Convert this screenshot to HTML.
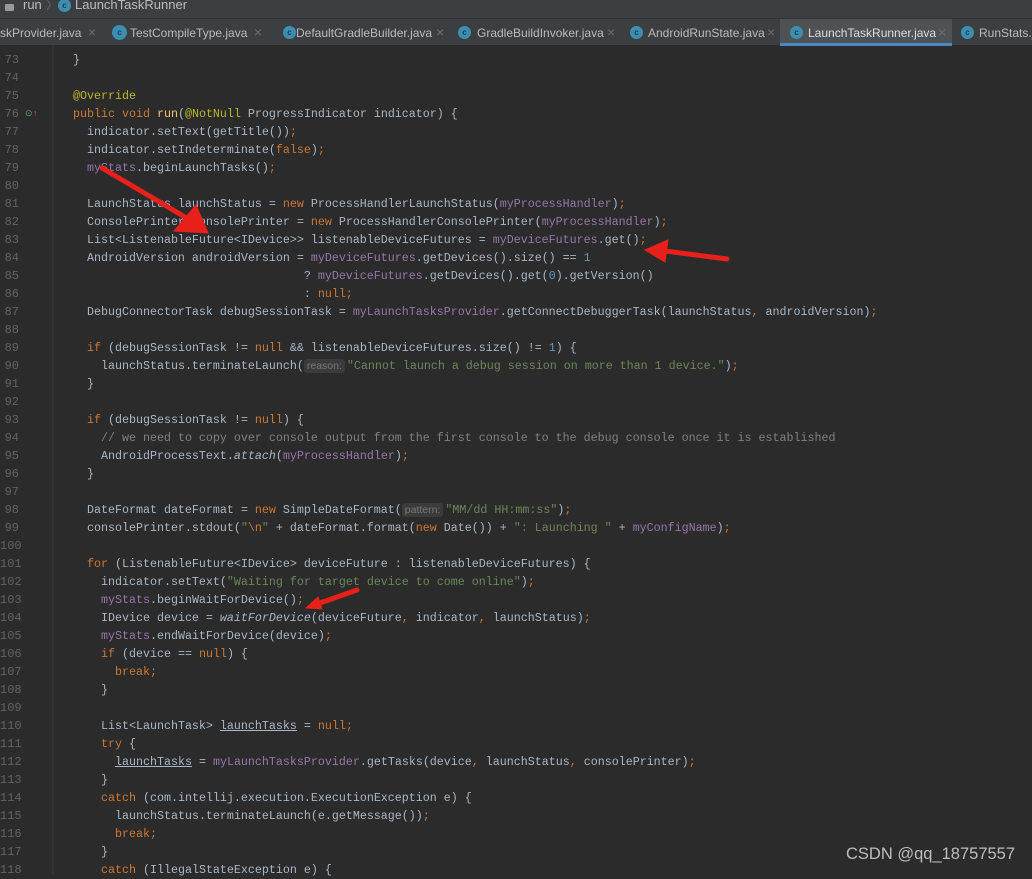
<!DOCTYPE html>
<html><head><meta charset="utf-8"><style>
*{margin:0;padding:0;box-sizing:border-box}
body{width:1032px;height:874px;overflow:hidden;background:#2b2b2b;position:relative;font-family:"Liberation Sans",sans-serif}
#bc{position:absolute;left:0;top:0;width:1032px;height:18px;background:#3c3f41;color:#bbb;font-size:12px;line-height:14px}
#tabs{position:absolute;left:0;top:18px;width:1032px;height:27px;background:#3c3f41;border-top:1px solid #323232;color:#bbb;font-size:12px}
.t{position:absolute;top:7px;white-space:nowrap}
.ic{position:absolute;top:7px;width:13px;height:13px;border-radius:50%;background:#3d8fb2;color:#1d3a47;font-size:8px;line-height:13px;text-align:center;font-weight:bold}
.x{position:absolute;top:5px;color:#6e6e6e;font-size:14px}
#act{position:absolute;left:780px;top:0;width:172px;height:27px;background:#4e5254;border-bottom:3px solid #4a88c7}
#code{position:absolute;left:0;top:0;width:1032px;height:874px;font-family:"Liberation Mono",monospace;font-size:11.67px;color:#a9b7c6}
.l{position:absolute;left:73px;height:18px;line-height:18px;white-space:pre}
.n{position:absolute;left:0;width:19px;text-align:right;height:18px;line-height:18px;color:#606366;font-size:12px}
.k{color:#cc7832}.f{color:#9876aa}.s{color:#6a8759}.a{color:#bbb529}.m{color:#ffc66d}.d{color:#6897bb}.c{color:#808080;font-style:italic}.i{font-style:italic}.u{text-decoration:underline}
.h{background:#3b3b3b;color:#787878;font-family:"Liberation Sans",sans-serif;font-size:10.5px;border-radius:3px;padding:1px 3px;margin-right:2px}
</style></head><body>
<div id="code">
<div id="lines"></div>
</div>
<div id="bc"><span style="position:absolute;left:5px;top:4px;width:9px;height:7px;background:#9a9a9a;border-radius:1px"></span><span style="position:absolute;left:23px;top:-2px;font-size:13px">run</span><span style="position:absolute;left:46px;top:-2px;color:#666">〉</span><span class="ic" style="left:58px;top:-1px">c</span><span style="position:absolute;left:75px;top:-2px;font-size:13px">LaunchTaskRunner</span></div>
<div id="tabs"><div id="act"></div>
<span class="t" style="left:0">skProvider.java</span><span class="x" style="left:88px">×</span>
<span class="ic" style="left:113px;box-shadow:0 0 0 1px #3d8fb2">c</span><span class="t" style="left:130px">TestCompileType.java</span><span class="x" style="left:254px">×</span>
<span class="ic" style="left:283px">c</span><span class="t" style="left:296px">DefaultGradleBuilder.java</span><span class="x" style="left:436px">×</span>
<span class="ic" style="left:458px">c</span><span class="t" style="left:477px">GradleBuildInvoker.java</span><span class="x" style="left:607px">×</span>
<span class="ic" style="left:630px">c</span><span class="t" style="left:648px">AndroidRunState.java</span><span class="x" style="left:767px">×</span>
<span class="ic" style="left:790px">c</span><span class="t" style="left:808px;color:#ddd">LaunchTaskRunner.java</span><span class="x" style="left:938px">×</span>
<span class="ic" style="left:961px">c</span><span class="t" style="left:979px">RunStats.java</span>
</div>
<svg style="position:absolute;left:0;top:0" width="1032" height="874">
<line x1="53" y1="45" x2="53" y2="874" stroke="#3a3a3a"/>
<g stroke="#e8201a" fill="#e8201a" stroke-width="5" stroke-linecap="round">
<line x1="102" y1="168" x2="190" y2="220"/><polygon stroke-width="1" points="208,233 174,231 196,205"/>
<line x1="727" y1="259" x2="665" y2="251"/><polygon stroke-width="1" points="645,250 668,240 665,262"/>
<line x1="357" y1="590" x2="320" y2="603"/><polygon stroke-width="1" points="306,608 318,597 322,609"/>
</g></svg>
<div style="position:absolute;left:846px;top:845px;color:#bdbdbd;font-size:16.5px">CSDN @qq_18757557</div>
<script>
const L={
73:[0,'}'],75:[0,'<span class="a">@Override</span>'],
76:[0,'<span class="k">public void </span><span class="m">run</span>(<span class="a">@NotNull</span> ProgressIndicator indicator) {'],
77:[1,'indicator.setText(getTitle())<span class="k">;</span>'],
78:[1,'indicator.setIndeterminate(<span class="k">false</span>)<span class="k">;</span>'],
79:[1,'<span class="f">myStats</span>.beginLaunchTasks()<span class="k">;</span>'],
81:[1,'LaunchStatus launchStatus = <span class="k">new </span>ProcessHandlerLaunchStatus(<span class="f">myProcessHandler</span>)<span class="k">;</span>'],
82:[1,'ConsolePrinter consolePrinter = <span class="k">new </span>ProcessHandlerConsolePrinter(<span class="f">myProcessHandler</span>)<span class="k">;</span>'],
83:[1,'List&lt;ListenableFuture&lt;IDevice&gt;&gt; listenableDeviceFutures = <span class="f">myDeviceFutures</span>.get()<span class="k">;</span>'],
84:[1,'AndroidVersion androidVersion = <span class="f">myDeviceFutures</span>.getDevices().size() == <span class="d">1</span>'],
85:[0,'                                 ? <span class="f">myDeviceFutures</span>.getDevices().get(<span class="d">0</span>).getVersion()'],
86:[0,'                                 : <span class="k">null;</span>'],
87:[1,'DebugConnectorTask debugSessionTask = <span class="f">myLaunchTasksProvider</span>.getConnectDebuggerTask(launchStatus<span class="k">, </span>androidVersion)<span class="k">;</span>'],
89:[1,'<span class="k">if </span>(debugSessionTask != <span class="k">null </span>&amp;&amp; listenableDeviceFutures.size() != <span class="d">1</span>) {'],
90:[2,'launchStatus.terminateLaunch(<span class="h">reason:</span><span class="s">"Cannot launch a debug session on more than 1 device."</span>)<span class="k">;</span>'],
91:[1,'}'],
93:[1,'<span class="k">if </span>(debugSessionTask != <span class="k">null</span>) {'],
94:[2,'<span class="c" style="font-style:normal">// we need to copy over console output from the first console to the debug console once it is established</span>'],
95:[2,'AndroidProcessText.<span class="i">attach</span>(<span class="f">myProcessHandler</span>)<span class="k">;</span>'],
96:[1,'}'],
98:[1,'DateFormat dateFormat = <span class="k">new </span>SimpleDateFormat(<span class="h">pattern:</span><span class="s">"MM/dd HH:mm:ss"</span>)<span class="k">;</span>'],
99:[1,'consolePrinter.stdout(<span class="s">"</span><span class="k">\\n</span><span class="s">"</span> + dateFormat.format(<span class="k">new </span>Date()) + <span class="s">": Launching "</span> + <span class="f">myConfigName</span>)<span class="k">;</span>'],
101:[1,'<span class="k">for </span>(ListenableFuture&lt;IDevice&gt; deviceFuture : listenableDeviceFutures) {'],
102:[2,'indicator.setText(<span class="s">"Waiting for target device to come online"</span>)<span class="k">;</span>'],
103:[2,'<span class="f">myStats</span>.beginWaitForDevice()<span class="k">;</span>'],
104:[2,'IDevice device = <span class="i">waitForDevice</span>(deviceFuture<span class="k">, </span>indicator<span class="k">, </span>launchStatus)<span class="k">;</span>'],
105:[2,'<span class="f">myStats</span>.endWaitForDevice(device)<span class="k">;</span>'],
106:[2,'<span class="k">if </span>(device == <span class="k">null</span>) {'],
107:[3,'<span class="k">break;</span>'],
108:[2,'}'],
110:[2,'List&lt;LaunchTask&gt; <span class="u">launchTasks</span> = <span class="k">null;</span>'],
111:[2,'<span class="k">try </span>{'],
112:[3,'<span class="u">launchTasks</span> = <span class="f">myLaunchTasksProvider</span>.getTasks(device<span class="k">, </span>launchStatus<span class="k">, </span>consolePrinter)<span class="k">;</span>'],
113:[2,'}'],
114:[2,'<span class="k">catch </span>(com.intellij.execution.ExecutionException e) {'],
115:[3,'launchStatus.terminateLaunch(e.getMessage())<span class="k">;</span>'],
116:[3,'<span class="k">break;</span>'],
117:[2,'}'],
118:[2,'<span class="k">catch </span>(IllegalStateException e) {']
};
let h='';
for(let n=72;n<=118;n++){const top=51+(n-73)*18;
h+=`<div class="n" style="top:${top}px">${n}</div>`;
if(L[n])h+=`<div class="l" style="top:${top}px;left:${73+L[n][0]*14}px">${L[n][1]}</div>`;}
h+='<div style="position:absolute;left:25px;top:109px;color:#59a869;font-size:9px">⊙<span style="color:#e05555">↑</span></div>';
document.getElementById('lines').innerHTML=h;
</script>
</body></html>
